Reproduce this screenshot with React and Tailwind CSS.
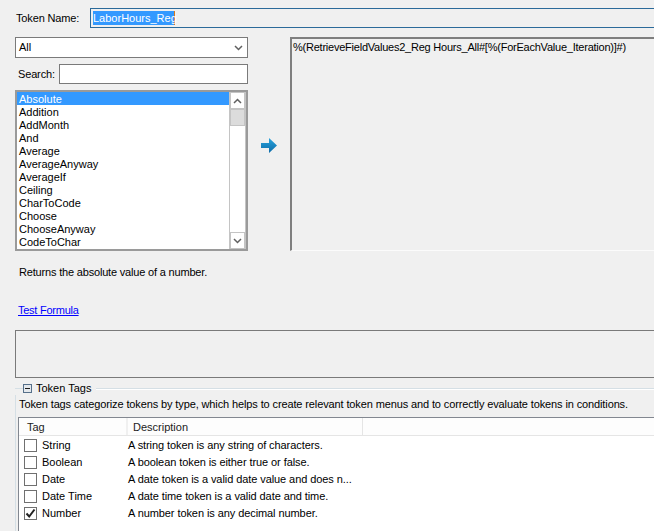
const functions = ["Addition", "AddMonth", "And", "Average", "AverageAnyway", "AverageIf", "Ceiling", "CharToCode", "Choose", "ChooseAnyway", "CodeToChar"]

const tags = [
  { name: "String", text: "A string token is any string of characters." },
  { name: "Boolean", text: "A boolean token is either true or false." },
  { name: "Date", text: "A date token is a valid date value and does n..." },
  { name: "Date Time", text: "A date time token is a valid date and time." },
  { name: "Number", text: "A number token is any decimal number.", checked: true },
]

function Chevron({ up, className }) {
  return (
    <svg width="9" height="6" viewBox="0 0 9 6" className={className}>
      <path d={up ? "M1 5L4.5 1.5L8 5" : "M1 1L4.5 4.5L8 1"} fill="none" stroke="#606060" strokeWidth="1.5" />
    </svg>
  )
}

function ScrollButton({ up }) {
  return (
    <div className="h-[17px] bg-white border border-[#c4c4c4] flex items-center justify-center">
      <Chevron up={up} />
    </div>
  )
}

function FunctionList() {
  return (
    <div className="mt-[6px] w-[233px] h-[161px] bg-white border-2 border-[#9a9a9a] flex overflow-hidden">
      <div className="w-[212px]">
        <div className="h-[13px] bg-[#3399ff] text-white leading-[15px] pl-[2px]">Absolute</div>
        {functions.map((f) => (
          <div key={f} className="h-[13px] leading-[15px] pl-[2px]">{f}</div>
        ))}
      </div>
      <div className="w-[17px] flex flex-col bg-white border-x border-[#c4c4c4]">
        <ScrollButton up />
        <div className="h-[17px] bg-[#dcdcdc] border border-[#c4c4c4]"></div>
        <div className="flex-1"></div>
        <ScrollButton />
      </div>
    </div>
  )
}

function TagRow({ tag }) {
  return (
    <div className="flex h-[17px] items-center">
      <div className="w-[109px] flex items-center pl-[5px]">
        <div className="w-[13px] h-[13px] bg-white border border-[#707070] flex items-center justify-center">
          {tag.checked && (
            <svg width="11" height="11" viewBox="0 0 11 11">
              <path d="M1.5 5.5L4.2 8.5L9.5 1.5" fill="none" stroke="#222" strokeWidth="2" />
            </svg>
          )}
        </div>
        <span className="ml-[5px] text-black">{tag.name}</span>
      </div>
      <span className="text-black tracking-[-0.08px]">{tag.text}</span>
    </div>
  )
}

export default function App() {
  return (
    <div className="w-[654px] h-[531px] overflow-hidden bg-[#f0f0f0] text-[11px] leading-[13px] text-black font-['Liberation_Sans',sans-serif]">
      {/* token name */}
      <div className="flex items-center pt-[8px] pl-[16px]">
        <span className="w-[74px] tracking-[-0.15px]">Token Name:</span>
        <div className="flex-1 h-[20px] bg-[#f0f0f0] border border-r-0 border-[#2b6a9a] pl-[2px] pt-[2px]">
          <span className="inline-block h-[14px] w-[82px] bg-[#3399ff] text-white leading-[14px] border-r border-[#d97a1c]">LaborHours_Reg</span>
        </div>
      </div>

      {/* formula editor */}
      <div className="flex pl-[15px] mt-[9px]">
        <div className="w-[233px]">
          <div className="h-[21px] bg-white border border-[#7a7a7a] flex items-center justify-between pl-[3px] pr-[4px]">
            <span>All</span>
            <Chevron />
          </div>
          <div className="flex items-center mt-[6px] h-[20px]">
            <span className="w-[44px] pl-[3px] tracking-[-0.15px]">Search:</span>
            <div className="flex-1 h-[20px] bg-white border border-[#7a7a7a]"></div>
          </div>
          <FunctionList />
        </div>
        <div className="w-[42px] h-[214px] flex items-center pl-[13px]">
          <svg width="16" height="15" viewBox="0 0 16 15" className="mt-[2px]">
            <defs>
              <linearGradient id="arrow" x1="0" y1="0" x2="0" y2="1">
                <stop offset="0" stopColor="#29a3dc" />
                <stop offset="1" stopColor="#0d6ba8" />
              </linearGradient>
            </defs>
            <path d="M0 5H8V0L16 7.5L8 15V10H0Z" fill="url(#arrow)" />
          </svg>
        </div>
        <div className="flex-1 h-[214px] border-l-2 border-t-2 border-[#7f7f7f] border-b border-b-[#fbfbfb] pl-[1px] pt-[2px] tracking-[-0.23px]">
          %(RetrieveFieldValues2_Reg Hours_All#[%(ForEachValue_Iteration)]#)
        </div>
      </div>

      <p className="pl-[19px] mt-[15px] tracking-[-0.18px]">Returns the absolute value of a number.</p>
      <p className="pl-[18px] mt-[25px] tracking-[-0.25px]">
        <a href="#" className="text-[#0000ff] underline">Test Formula</a>
      </p>

      <div className="ml-[15px] mt-[13px] h-[48px] border border-r-0 border-[#7a7a7a]"></div>

      {/* token tags group */}
      <div className="flex items-center ml-[15px] mt-[4px] h-[13px]">
        <div className="w-[8px] h-[1px] bg-[#d5dfe5] self-center"></div>
        <div className="w-[9px] h-[9px] bg-[#e4e8ec] border border-[#56708a] flex items-center justify-center">
          <div className="w-[5px] h-[1px] bg-[#1a1a1a]"></div>
        </div>
        <span className="ml-[4px] mr-[5px]">Token Tags</span>
        <div className="flex-1 h-[2px] border-t border-[#d5dfe5] bg-white"></div>
      </div>
      <div className="ml-[15px] border-l border-[#d5dfe5]">
        <p className="pl-[3px] pt-[3px] h-[22px] tracking-[-0.12px]">Token tags categorize tokens by type, which helps to create relevant token menus and to correctly evaluate tokens in conditions.</p>
        <div className="ml-[2px] h-[132px] bg-white border-l border-t border-[#828790]">
          <div className="flex h-[18px] mb-[1px] bg-[#fdfdfd] border-b border-[#e5e5e5] text-[#222]">
            <div className="w-[109px] pl-[8px] leading-[19px] border-r-2 border-[#f0f0f0]">Tag</div>
            <div className="w-[235px] pl-[5px] leading-[19px] border-r border-[#e5e5e5]">Description</div>
          </div>
          {tags.map((tag) => (
            <TagRow key={tag.name} tag={tag} />
          ))}
        </div>
      </div>
    </div>
  )
}
